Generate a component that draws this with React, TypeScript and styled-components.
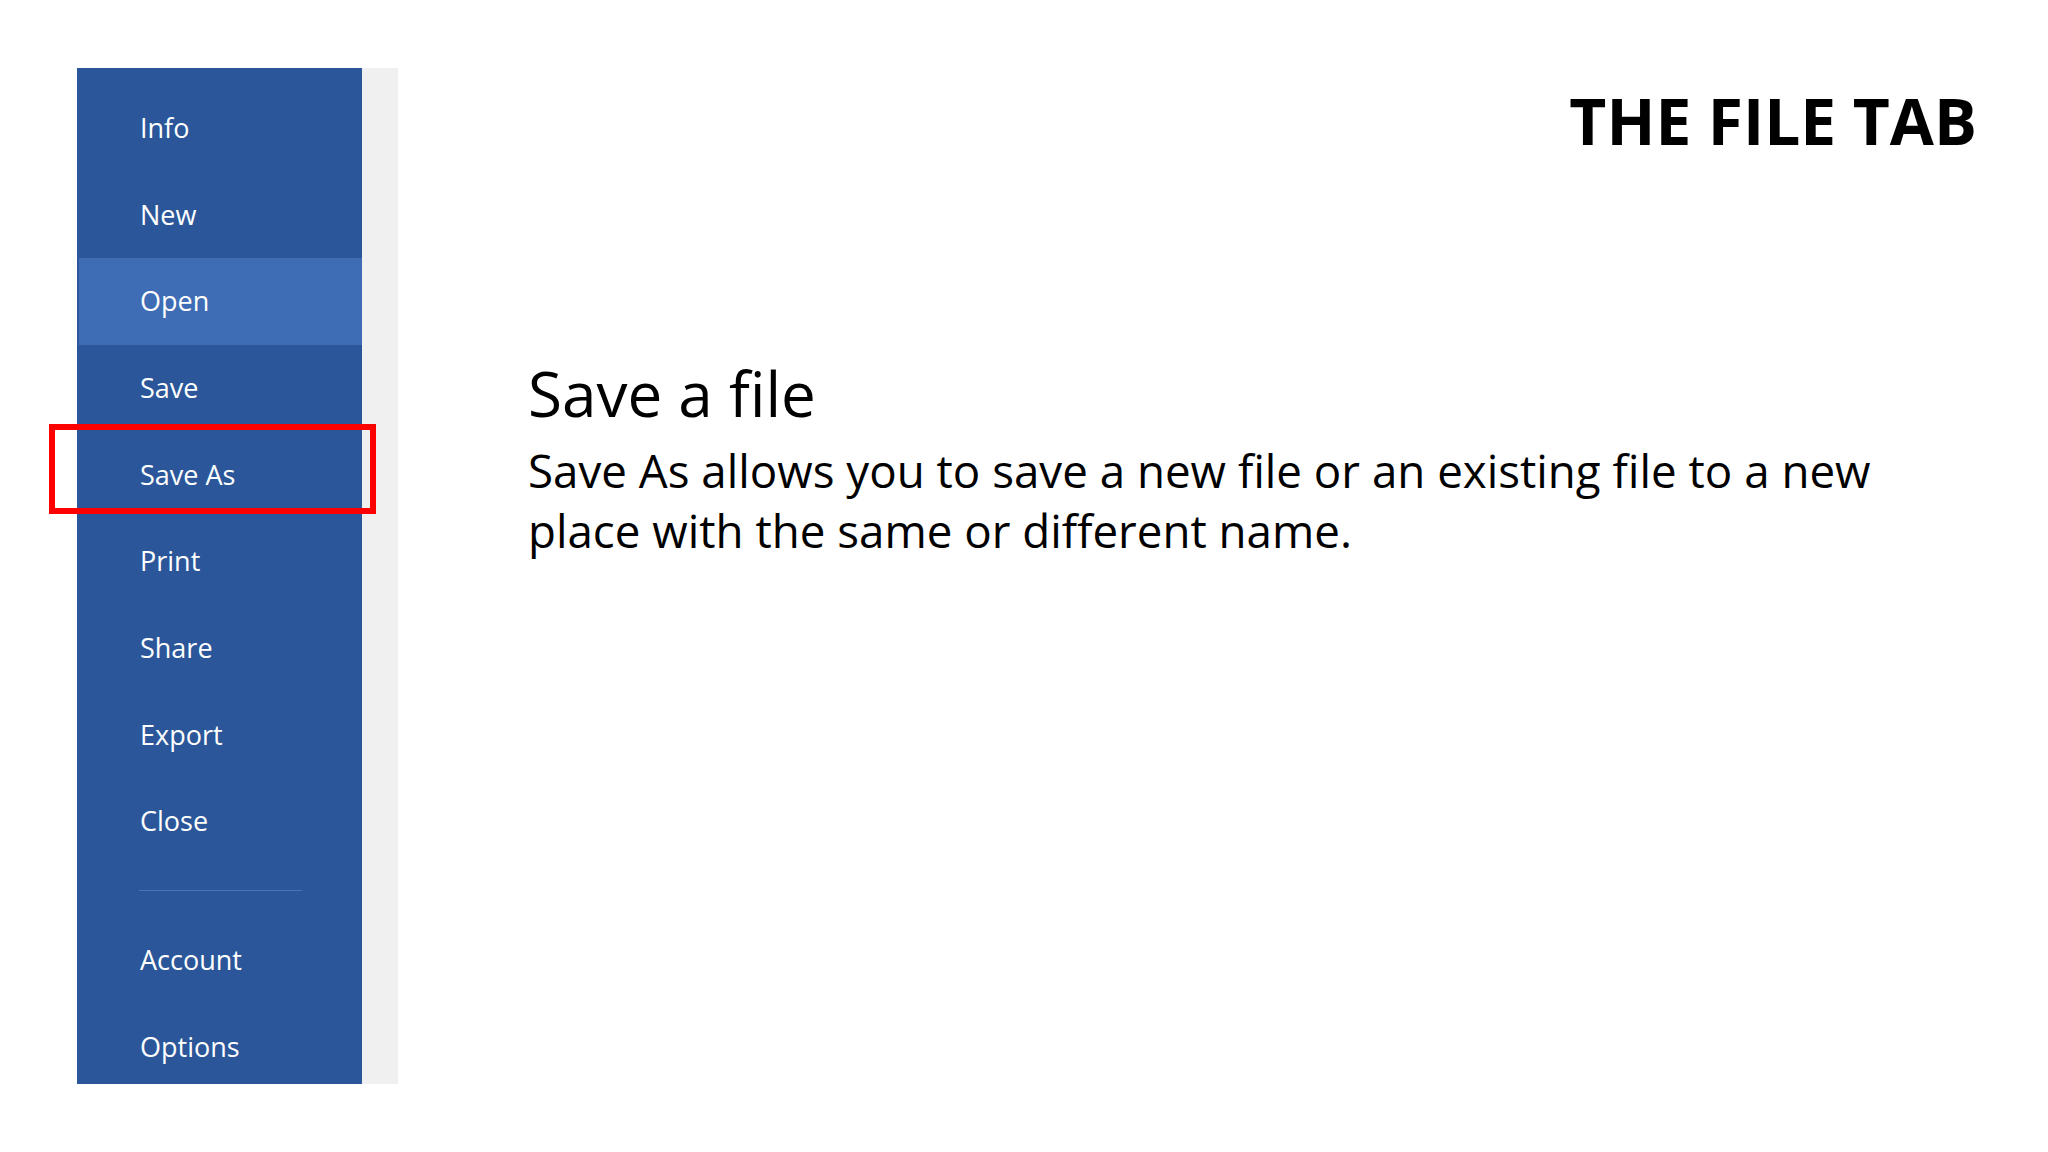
import React from "react";
import styled, { createGlobalStyle } from "styled-components";

const Global = createGlobalStyle`
  html, body { margin: 0; padding: 0; background: #ffffff; }
  body { width: 2048px; height: 1152px; overflow: hidden; }
`;

const Page = styled.div`
  display: flex;
  width: 2048px;
  height: 1152px;
  background: #ffffff;
  box-sizing: border-box;
`;

const BackstageCol = styled.div`
  display: flex;
  margin-left: 77px;
  margin-top: 68px;
  height: 1016px;
`;

const Sidebar = styled.nav`
  width: 285px;
  height: 100%;
  background: #2b579a;
  padding-top: 17px;
  box-sizing: border-box;
  display: flex;
  flex-direction: column;
`;

const Strip = styled.div`
  width: 36px;
  height: 100%;
  background: #f0f0f0;
`;

const Item = styled.div<{ $active?: boolean }>`
  position: relative;
  flex: 0 0 auto;
  height: 86.67px;
  line-height: 86.67px;
  margin-left: ${(p) => (p.$active ? "2px" : "0")};
  padding-left: ${(p) => (p.$active ? "61px" : "63px")};
  background: ${(p) => (p.$active ? "#3e6db5" : "transparent")};
  color: #ffffff;
  font-family: "Open Sans", "Noto Sans", sans-serif;
  font-size: 27px;
  white-space: nowrap;
`;

const Highlight = styled.div`
  position: absolute;
  left: -28px;
  right: -14px;
  top: -8px;
  bottom: 4px;
  border: 6px solid #ff0000;
  pointer-events: none;
`;

const SepBlock = styled.div`
  flex: 0 0 52px;
  display: flex;
  align-items: center;
  padding-left: 62px;
`;

const SepLine = styled.div`
  width: 163px;
  height: 1px;
  background: #4a74b8;
`;

const Main = styled.main`
  flex: 1;
  display: flex;
  flex-direction: column;
  padding-left: 130px;
  padding-right: 71px;
  padding-top: 81px;
`;

const Title = styled.h1`
  margin: 0;
  align-self: flex-end;
  font-family: "Open Sans", "Noto Sans", sans-serif;
  font-weight: 700;
  font-size: 64px;
  line-height: 80px;
  color: #000000;
  white-space: nowrap;
`;

const Heading = styled.h2`
  margin: 197px 0 0 0;
  font-family: "Open Sans", "Noto Sans", sans-serif;
  font-weight: 400;
  font-size: 62px;
  line-height: 70px;
  color: #000000;
`;

const Body = styled.p`
  margin: 12px 0 0 0;
  max-width: 1400px;
  font-family: "Open Sans", "Noto Sans", sans-serif;
  font-weight: 400;
  font-size: 45.7px;
  line-height: 60px;
  color: #000000;
`;

const items = ["Info", "New", "Open", "Save", "Save As", "Print", "Share", "Export", "Close"];
const bottomItems = ["Account", "Options"];

export default function App() {
  return (
    <>
      <Global />
      <Page>
        <BackstageCol>
          <Sidebar>
            {items.map((label) => (
              <Item key={label} $active={label === "Open"}>
                {label}
                {label === "Save As" && <Highlight />}
              </Item>
            ))}
            <SepBlock>
              <SepLine />
            </SepBlock>
            {bottomItems.map((label) => (
              <Item key={label}>{label}</Item>
            ))}
          </Sidebar>
          <Strip />
        </BackstageCol>
        <Main>
          <Title>THE FILE TAB</Title>
          <Heading>Save a file</Heading>
          <Body>
            Save As allows you to save a new file or an existing file to a new place with the same or different name.
          </Body>
        </Main>
      </Page>
    </>
  );
}
